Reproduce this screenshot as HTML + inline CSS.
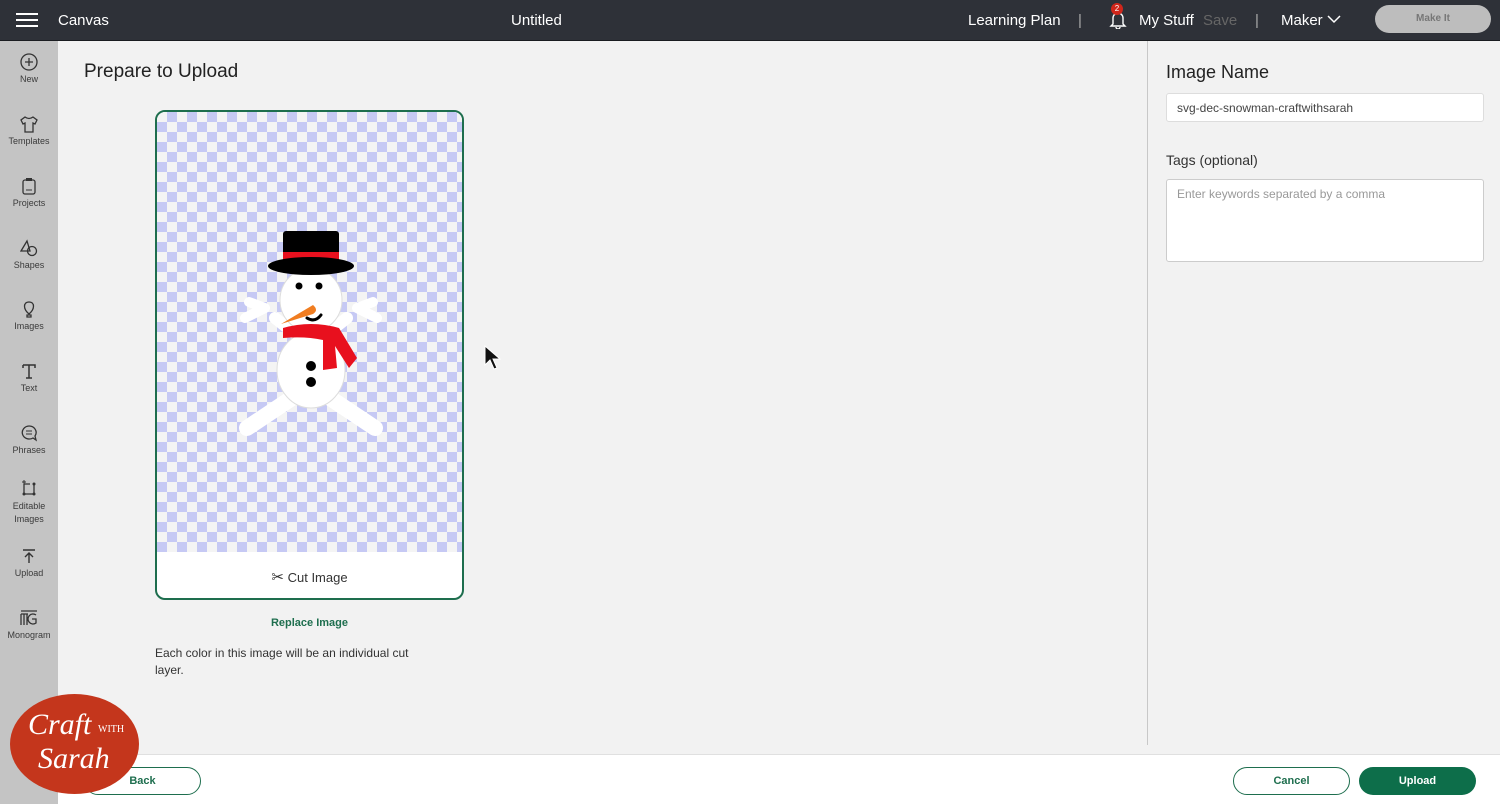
<!DOCTYPE html>
<html><head><meta charset="utf-8"><style>
*{box-sizing:border-box;margin:0;padding:0}
body{width:1500px;height:804px;overflow:hidden;background:#f2f2f2;font-family:"Liberation Sans",sans-serif;position:relative;color:#222}
.hdr{position:absolute;left:0;top:0;width:1500px;height:41px;background:#2e3138;border-bottom:1px solid #1a1c20;color:#fff;font-size:15px}
.hdr span{position:absolute;top:12px}
.side{position:absolute;left:0;top:41px;width:58px;height:763px;background:#c4c4c4}
.si{position:absolute;left:0;width:58px;text-align:center;font-size:9px;color:#3a3a3a}
.si svg{display:block;margin:0 auto 3px}
.divider{position:absolute;left:1147px;top:41px;width:1px;height:704px;background:#c8c8c8}
.foot{position:absolute;left:58px;top:754px;width:1442px;height:50px;background:#fff;border-top:1px solid #e0e0e0}
.btn{position:absolute;height:28px;border-radius:14px;font-size:11px;font-weight:bold;text-align:center;line-height:26px}
.card{position:absolute;left:155px;top:110px;width:309px;height:490px;border:2px solid #1e6e4e;border-radius:10px;background:#fff;overflow:hidden}
.chk{position:absolute;left:0;top:0;width:305px;height:440px;background-color:#f4f4f4;background-image:linear-gradient(45deg,#c6c9f4 25%,transparent 25%,transparent 75%,#c6c9f4 75%),linear-gradient(45deg,#c6c9f4 25%,transparent 25%,transparent 75%,#c6c9f4 75%);background-size:20px 20px;background-position:0 0,10px 10px}
.ta{position:absolute;background:#fff;border:1px solid #ddd;border-radius:3px;font-family:"Liberation Sans",sans-serif;font-size:12px}
</style></head><body>
<div class="hdr">
<svg style="position:absolute;left:16px;top:12px" width="22" height="16"><rect y="1" width="22" height="2" fill="#fff"/><rect y="7" width="22" height="2" fill="#fff"/><rect y="13" width="22" height="2" fill="#fff"/></svg>
<span style="left:58px">Canvas</span>
<span style="left:511px">Untitled</span>
<span style="left:968px">Learning Plan</span>
<span style="left:1078px;color:#aaa">|</span>
<svg style="position:absolute;left:1109px;top:9px" width="18" height="20"><path d="M4 15 V9 a5 5 0 0 1 10 0 V15 L16 17 H2 Z M7 18 a2 2 0 0 0 4 0" fill="none" stroke="#fff" stroke-width="1.4"/></svg>
<div style="position:absolute;left:1111px;top:3px;width:12px;height:12px;border-radius:6px;background:#d0261b;color:#fff;font-size:8px;text-align:center;line-height:12px">2</div>
<span style="left:1139px">My Stuff</span>
<span style="left:1203px;color:#666">Save</span>
<span style="left:1255px;color:#aaa">|</span>
<span style="left:1281px">Maker</span>
<svg style="position:absolute;left:1327px;top:15px" width="14" height="9"><path d="M1 1 L7 7 L13 1" fill="none" stroke="#fff" stroke-width="1.5"/></svg>
<div style="position:absolute;left:1375px;top:5px;width:116px;height:28px;border-radius:14px;background:#bdbdbd;color:#777;font-size:10px;font-weight:bold;text-align:center;line-height:28px">Make It</div>
</div>
<div class="side">
<div class="si" style="top:12px"><svg width="18" height="18"><circle cx="9" cy="9" r="8" fill="none" stroke="#333" stroke-width="1.3"/><path d="M9 5V13M5 9H13" stroke="#333" stroke-width="1.3"/></svg>New</div>
<div class="si" style="top:74px"><svg width="18" height="18"><path d="M5 2 L1 5 L3 9 L5 8 V17 H13 V8 L15 9 L17 5 L13 2 Q9 5 5 2Z" fill="none" stroke="#333" stroke-width="1.3"/></svg>Templates</div>
<div class="si" style="top:136px"><svg width="18" height="18"><rect x="3" y="3" width="12" height="14" rx="2" fill="none" stroke="#333" stroke-width="1.3"/><rect x="6" y="1" width="6" height="3" fill="#333"/><path d="M6 13H12" stroke="#333"/></svg>Projects</div>
<div class="si" style="top:198px"><svg width="18" height="18"><path d="M7 2 L1 12 H10 Z" fill="none" stroke="#333" stroke-width="1.3"/><circle cx="12" cy="12" r="4.5" fill="none" stroke="#333" stroke-width="1.3"/></svg>Shapes</div>
<div class="si" style="top:259px"><svg width="18" height="18"><path d="M9 14 C3 9 3 2 9 2 C15 2 15 9 9 14Z M7 15H11V17H7Z" fill="none" stroke="#333" stroke-width="1.3"/></svg>Images</div>
<div class="si" style="top:321px"><svg width="18" height="18"><path d="M3 3H15V6M3 3V6M9 3V16M6 16H12" fill="none" stroke="#333" stroke-width="1.5"/></svg>Text</div>
<div class="si" style="top:383px"><svg width="18" height="18"><path d="M9 2 A7 6.5 0 1 0 13 14 L16 16 L15 12 A7 6.5 0 0 0 9 2Z" fill="none" stroke="#333" stroke-width="1.3"/><path d="M6 7H12M6 10H12" stroke="#333"/></svg>Phrases</div>
<div class="si" style="top:438px;line-height:13px"><svg width="18" height="18"><path d="M4 5V15H14V5M4 5H10" fill="none" stroke="#333" stroke-width="1.3"/><circle cx="4" cy="15" r="1.5" fill="#333"/><circle cx="14" cy="15" r="1.5" fill="#333"/><circle cx="14" cy="5" r="1.5" fill="#333"/><path d="M4 1V5M2 3H6" stroke="#333"/></svg>Editable<br>Images</div>
<div class="si" style="top:506px"><svg width="18" height="18"><path d="M3 3H15M9 6V16M5 10L9 6L13 10" fill="none" stroke="#333" stroke-width="1.4"/></svg>Upload</div>
<div class="si" style="top:568px"><svg width="20" height="18"><path d="M2 2H18M2 5V16M5 5V16M8 5V16M2 5H9M17 6A5 5 0 1 0 17 14V10H13" fill="none" stroke="#333" stroke-width="1.3"/></svg>Monogram</div>
</div>
<div style="position:absolute;left:84px;top:61px;font-size:19px;color:#222">Prepare to Upload</div>
<div class="card"><div class="chk"></div>
<svg style="position:absolute;left:78px;top:116px" width="152" height="210" viewBox="0 0 152 210">
<path d="M30 80 L14 74 M30 80 L10 90 M122 80 L138 74 M122 80 L142 90" stroke="#fff" stroke-width="10" stroke-linecap="round"/>
<path d="M40 90 L68 112 M112 90 L84 112" stroke="#fff" stroke-width="12" stroke-linecap="round"/>
<path d="M60 168 L12 200 M92 168 L140 200" stroke="#fff" stroke-width="16" stroke-linecap="round"/>
<ellipse cx="76" cy="142" rx="34" ry="38" fill="#fff" stroke="#ddd"/>
<ellipse cx="76" cy="72" rx="31" ry="32" fill="#fff" stroke="#ddd"/>
<path d="M48 100 Q76 92 104 100 L122 130 L114 140 L100 118 L102 140 L88 142 L88 112 Q70 108 48 110Z" fill="#e8101e"/>
<rect x="48" y="3" width="56" height="30" rx="3" fill="#000"/>
<rect x="48" y="24" width="56" height="8" fill="#e8101e"/>
<ellipse cx="76" cy="38" rx="43" ry="9" fill="#000"/>
<circle cx="64" cy="58" r="3.5" fill="#000"/><circle cx="84" cy="58" r="3.5" fill="#000"/>
<path d="M46 96 L78 77 Q84 82 78 86Z" fill="#f07d21"/>
<path d="M72 90 Q80 95 86 87" fill="none" stroke="#000" stroke-width="3" stroke-linecap="round"/>
<circle cx="76" cy="138" r="5" fill="#000"/><circle cx="76" cy="154" r="5" fill="#000"/>
</svg>
<div style="position:absolute;left:0;top:456px;width:305px;text-align:center;font-size:13px;color:#333"><span style="font-size:15px">✂</span> Cut Image</div>
</div>
<div style="position:absolute;left:155px;top:617px;width:309px;text-align:center;font-size:11px;font-weight:bold;color:#1e6e4e">Replace Image</div>
<div style="position:absolute;left:155px;top:645px;width:285px;font-size:12px;line-height:17px;color:#333">Each color in this image will be an individual cut layer.</div>
<div class="divider"></div>
<div style="position:absolute;left:1166px;top:62px;font-size:18px;color:#222">Image Name</div>
<div class="ta" style="left:1166px;top:93px;width:318px;height:29px;padding:7px 10px;color:#444">svg-dec-snowman-craftwithsarah</div>
<div style="position:absolute;left:1166px;top:152px;font-size:14px;color:#333">Tags (optional)</div>
<div class="ta" style="left:1166px;top:179px;width:318px;height:83px;padding:7px 10px;color:#999;border-color:#ccc">Enter keywords separated by a comma</div>
<div class="foot"></div>
<div class="btn" style="left:84px;top:767px;width:117px;border:1.5px solid #1e6e4e;color:#1e6e4e;background:#fff">Back</div>
<div class="btn" style="left:1233px;top:767px;width:117px;border:1.5px solid #1e6e4e;color:#1e6e4e;background:#fff">Cancel</div>
<div class="btn" style="left:1359px;top:767px;width:117px;background:#0d6e4a;color:#fff;line-height:28px">Upload</div>
<div style="position:absolute;left:10px;top:694px;width:129px;height:100px;border-radius:50%;background:#c4361c;color:#fff;font-family:'Liberation Serif',serif;font-style:italic">
<div style="position:absolute;left:18px;top:14px;font-size:30px">Craft</div>
<div style="position:absolute;left:88px;top:30px;font-size:10px;font-style:normal">WITH</div>
<div style="position:absolute;left:28px;top:48px;font-size:30px">Sarah</div>
</div>
<svg style="position:absolute;left:484px;top:345px" width="18" height="26"><path d="M1 1 L1 20 L6 15 L10 24 L13 23 L9 14 L16 14 Z" fill="#111" stroke="#fff" stroke-width="1"/></svg>
</body></html>
